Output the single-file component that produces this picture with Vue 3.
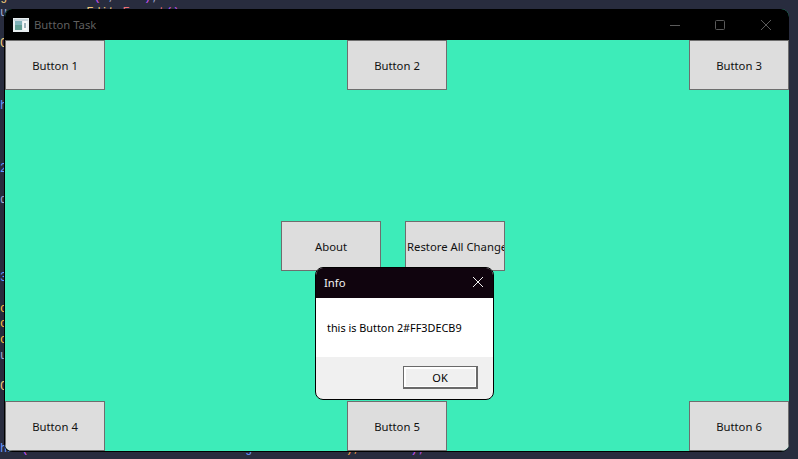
<script setup>
const lines = [
  [['gmlSharedNext', 'tan'], ['(', 'pur'], ['0', 'ora'], [', ', 'gry'], ['208', 'red'], [')', 'pur'], [';', 'gry']],
  [['u', 'gry'], ['           ', 'gry'], ['Edit', 'tan'], ['.', 'gry'], ['Format', 'red'], ['()', 'pur'], [';', 'gry']],
  [[' ', 'gry']],
  [['C', 'tan']],
  [[' ', 'gry']], [[' ', 'gry']], [[' ', 'gry']],
  [['h', 'blu']],
  [[' ', 'gry']], [[' ', 'gry']], [[' ', 'gry']],
  [['2', 'blu']],
  [[' ', 'gry']],
  [['di', 'gry']],
  [[' ', 'gry']], [[' ', 'gry']], [[' ', 'gry']], [[' ', 'gry']],
  [['3', 'blu']],
  [[' ', 'gry']],
  [['o', 'yel']],
  [['o', 'yel']],
  [['o', 'yel']],
  [['u', 'gry']],
  [[' ', 'gry']],
  [['C', 'tan']],
  [[' ', 'gry']], [[' ', 'gry']], [[' ', 'gry']],
  [['hWn', 'blu'], ['(', 'pur'], [' ', 'gry'], ['this', 'grn'], ['   ', 'gry'], ['button', 'grn'], [' ', 'gry'], ['5', 'grn'], ['     ', 'gry'], ['ShowMessageBoundTextLen', 'blu'], ['),', 'ora'], ['  ', 'gry'], ['Info', 'grn'], [' ', 'gry'], [');', 'pur']],
]
const topRow = ['Button 1', 'Button 2', 'Button 3']
const bottomRow = ['Button 4', 'Button 5', 'Button 6']
</script>

<template>
  <div class="desktop">
    <div class="code">
      <div v-for="(line, i) in lines" :key="i" class="code-line"><span v-for="(t, j) in line" :key="j" :class="t[1]">{{ t[0] }}</span></div>
    </div>

    <div class="window">
      <div class="titlebar">
        <svg class="app-icon" width="16" height="14" viewBox="0 0 16 14">
          <rect x="0" y="0" width="16" height="14" fill="#e8eef0" />
          <rect x="1" y="1" width="14" height="2" fill="#c9d6dc" />
          <rect x="2" y="3" width="7" height="9" fill="#5f9c92" />
          <rect x="2" y="3" width="7" height="4" fill="#7fb0b8" />
          <rect x="10" y="3" width="4" height="9" fill="#f6f8f8" />
          <rect x="11" y="5" width="2" height="5" fill="#9fb4bc" />
        </svg>
        <span class="title">Button Task</span>
        <div class="controls">
          <svg width="14" height="14" viewBox="0 0 14 14"><path d="M2 7.5h10" stroke="#5a5a5a" fill="none" /></svg>
          <svg width="14" height="14" viewBox="0 0 14 14"><rect x="2.5" y="2.5" width="9" height="9" rx="1" stroke="#5a5a5a" fill="none" /></svg>
          <svg class="close" width="14" height="14" viewBox="0 0 14 14"><path d="M2 2l10 10M12 2L2 12" stroke="#5a5a5a" fill="none" /></svg>
        </div>
      </div>
      <div class="client">
        <div class="row">
          <button v-for="b in topRow" :key="b" class="btn">{{ b }}</button>
        </div>
        <div class="row middle">
          <button class="btn">About</button>
          <button class="btn clipped">Restore All Changes</button>
        </div>
        <div class="row">
          <button v-for="b in bottomRow" :key="b" class="btn">{{ b }}</button>
        </div>
      </div>
    </div>

    <div class="dialog">
      <div class="dialog-title">
        <span>Info</span>
        <svg width="12" height="12" viewBox="0 0 12 12"><path d="M1 1l10 10M11 1L1 11" stroke="#f2f2f2" fill="none" /></svg>
      </div>
      <div class="dialog-body">this is Button 2#FF3DECB9</div>
      <div class="dialog-foot"><button class="ok">OK</button></div>
    </div>
  </div>
</template>

<style scoped>
.desktop {
  position: relative;
  width: 798px;
  height: 459px;
  overflow: hidden;
  background: #282c3e;
  font-family: "Noto Sans", sans-serif;
}
.code {
  margin-top: -10px;
  font: 12px/15.6px "Liberation Mono", monospace;
  color: #8b93ad;
}
.code-line { white-space: pre; height: 15.6px; }
.tan { color: #f0c878; }
.pur { color: #c850f0; }
.ora { color: #f0a040; }
.red { color: #f07078; }
.gry { color: #a0aad0; }
.blu { color: #6a98ff; }
.yel { color: #ffc040; }
.grn { color: #a0d880; }

.window {
  position: absolute;
  left: 4px;
  top: 9px;
  width: 785px;
  height: 443px;
  box-sizing: border-box;
  border-left: 1px solid #000;
  border-bottom: 1px solid #000;
  border-radius: 8px;
  overflow: hidden;
  background: #3decb9;
}
.titlebar {
  height: 31px;
  background: #000;
  display: flex;
  align-items: center;
  padding-left: 8px;
}
.app-icon { margin-right: 5px; }
.title { font-size: 11.3px; color: #5f5f5f; }
.controls {
  margin-left: auto;
  display: flex;
  gap: 31px;
  padding-right: 16px;
}
.close { margin-left: 1px; }
.client {
  display: grid;
  grid-template-rows: 50px 131px 50px 130px 50px;
  height: 411px;
}
.row {
  display: flex;
  justify-content: space-between;
}
.client .row:nth-child(2) { grid-row: 3; }
.client .row:nth-child(3) { grid-row: 5; }
.middle {
  justify-content: center;
  gap: 24px;
  padding-right: 8px;
}
.btn {
  width: 100px;
  height: 50px;
  padding: 0;
  box-sizing: border-box;
  background: #dddddd;
  border: 1px solid #6e6e6e;
  border-radius: 0;
  font: 11.3px "Noto Sans", sans-serif;
  color: #111;
  white-space: nowrap;
  overflow: hidden;
}
.clipped {
  display: flex;
  align-items: center;
  padding-left: 1px;
}
.dialog {
  position: absolute;
  left: 315px;
  top: 267px;
  width: 179px;
  height: 133px;
  box-sizing: border-box;
  border: 1px solid #000;
  border-radius: 8px;
  overflow: hidden;
  display: flex;
  flex-direction: column;
  background: #f0f0f0;
}
.dialog-title {
  height: 30px;
  box-sizing: border-box;
  background: #10040e;
  color: #f2f2f2;
  font-size: 11.3px;
  display: flex;
  align-items: center;
  justify-content: space-between;
  padding: 0 9px 2px 8px;
}
.dialog-body {
  height: 59px;
  background: #fff;
  color: #000;
  font-size: 10.85px;
  box-sizing: border-box;
  padding: 21px 0 0 11px;
  line-height: 17px;
}
.dialog-foot {
  flex: 1;
  display: flex;
  justify-content: flex-end;
  padding: 9px 15px 0 0;
}
.ok {
  width: 75px;
  height: 23px;
  padding: 0;
  box-sizing: border-box;
  background: #f0f0f0;
  border: 1px solid #6a6a6a;
  border-right-width: 2px;
  border-bottom-width: 2px;
  box-shadow: inset 2px 2px 0 #fff, inset -1px -1px 0 #fff;
  font: 11px "Noto Sans", sans-serif;
  color: #000;
}
</style>
